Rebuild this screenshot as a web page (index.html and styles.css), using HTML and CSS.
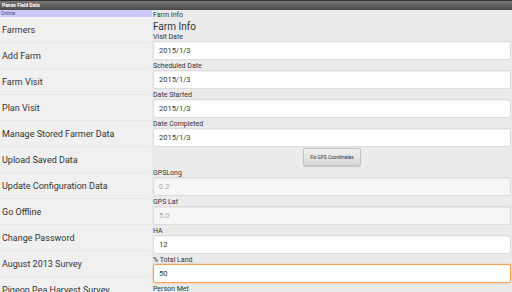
FILE: index.html
```html
<!DOCTYPE html>
<html lang="en">

<head>
    <meta charset="UTF-8">
    <meta name="viewport" content="width=device-width, initial-scale=1.0">
    <title>Panex Field Data</title>
    <link rel="stylesheet" href="styles.css">
</head>

<body>
    <div class="titlebar">Panex Field Data</div>
    <div class="main">
        <aside class="sidebar">
            <div class="status">Online</div>
            <ul class="menu">
                <li>Farmers</li>
                <li>Add Farm</li>
                <li>Farm Visit</li>
                <li>Plan Visit</li>
                <li>Manage Stored Farmer Data</li>
                <li>Upload Saved Data</li>
                <li>Update Configuration Data</li>
                <li>Go Offline</li>
                <li>Change Password</li>
                <li>August 2013 Survey</li>
                <li>Pigeon Pea Harvest Survey</li>
            </ul>
        </aside>

        <section class="form">
            <div class="section-label">Farm Info</div>
            <h2>Farm Info</h2>
            <div class="field">
                <label for="visitDate">Visit Date</label>
                <input type="text" id="visitDate" value="2015/1/3">
            </div>
            <div class="field">
                <label for="scheduledDate">Scheduled Date</label>
                <input type="text" id="scheduledDate" value="2015/1/3">
            </div>
            <div class="field">
                <label for="dateStarted">Date Started</label>
                <input type="text" id="dateStarted" value="2015/1/3">
            </div>
            <div class="field">
                <label for="dateCompleted">Date Completed</label>
                <input type="text" id="dateCompleted" value="2015/1/3">
            </div>
            <div class="actions">
                <button type="button" class="btn">Fix GPS Coordinates</button>
            </div>
            <div class="field">
                <label for="gpsLong">GPSLong</label>
                <input type="text" id="gpsLong" value="0.2" disabled>
            </div>
            <div class="field">
                <label for="gpsLat">GPS Lat</label>
                <input type="text" id="gpsLat" value="5.0" disabled>
            </div>
            <div class="field">
                <label for="ha">HA</label>
                <input type="text" id="ha" value="12">
            </div>
            <div class="field">
                <label for="totalLand">% Total Land</label>
                <input type="text" id="totalLand" class="focused" value="50">
            </div>
            <div class="field">
                <label for="personMet">Person Met</label>
                <input type="text" id="personMet" value="">
            </div>
        </section>
    </div>
</body>

</html>
```

FILE: styles.css
```css
/* General Reset */
* {
    margin: 0;
    padding: 0;
    box-sizing: border-box;
    font-family: 'Roboto', 'Liberation Sans', sans-serif;
}

html {
    overflow: hidden;
}

body {
    width: 512px;
    height: 292px;
    overflow: hidden;
    background: #ebebeb;
    color: #333;
}

.titlebar {
    height: 10px;
    padding-left: 2px;
    background: linear-gradient(#7a7a7a, #4a4a4a);
    border-top: 1px solid #333;
    color: #fff;
    font-size: 5px;
    font-weight: bold;
    line-height: 9px;
}

.main {
    display: flex;
    height: 282px;
    overflow: hidden;
}

/* Left menu */
.sidebar {
    width: 152px;
    background: #f0f0f0;
}

.status {
    height: 7px;
    padding-left: 1px;
    background: #c9c9fb;
    color: #4a4a7a;
    font-size: 5px;
    line-height: 7px;
}

.menu {
    list-style: none;
    width: 150px;
}

.menu li {
    height: 26px;
    padding-left: 2px;
    border-bottom: 1px solid #e6e6e6;
    font-size: 9px;
    line-height: 27px;
    color: #333;
    white-space: nowrap;
}

/* Form */
.form {
    flex: 1;
    padding: 1px 1px 0 1px;
    background: #ebebeb;
}

.section-label {
    font-size: 7px;
    line-height: 9px;
}

h2 {
    font-size: 10px;
    font-weight: normal;
    line-height: 13px;
}

.field {
    margin-bottom: 2px;
}

.field label {
    display: block;
    font-size: 7px;
    line-height: 8px;
    color: #333;
}

.field input {
    display: block;
    width: 100%;
    height: 19px;
    padding: 0 5px;
    border: 1px solid #dcdcdc;
    border-radius: 2px;
    background: #fff;
    box-shadow: inset 0 1px 1px rgba(0, 0, 0, 0.06);
    font-size: 7.5px;
    color: #333;
    outline: none;
}

.field input:disabled {
    background: #f6f6f6;
    color: #a8a8a8;
}

.field input.focused {
    border: 1px solid #f5a050;
    box-shadow: 0 0 2px rgba(245, 150, 60, 0.7);
}

.actions {
    display: flex;
    justify-content: center;
    padding: 0 0 3px 0;
    margin-top: -1px;
}

.btn {
    width: 58px;
    height: 18px;
    border: 1px solid #c4c4c4;
    border-radius: 2px;
    background: linear-gradient(#f2f2f2, #d6d6d6);
    box-shadow: 0 1px 1px rgba(0, 0, 0, 0.15);
    font-size: 4.8px;
    color: #333;
}
```
